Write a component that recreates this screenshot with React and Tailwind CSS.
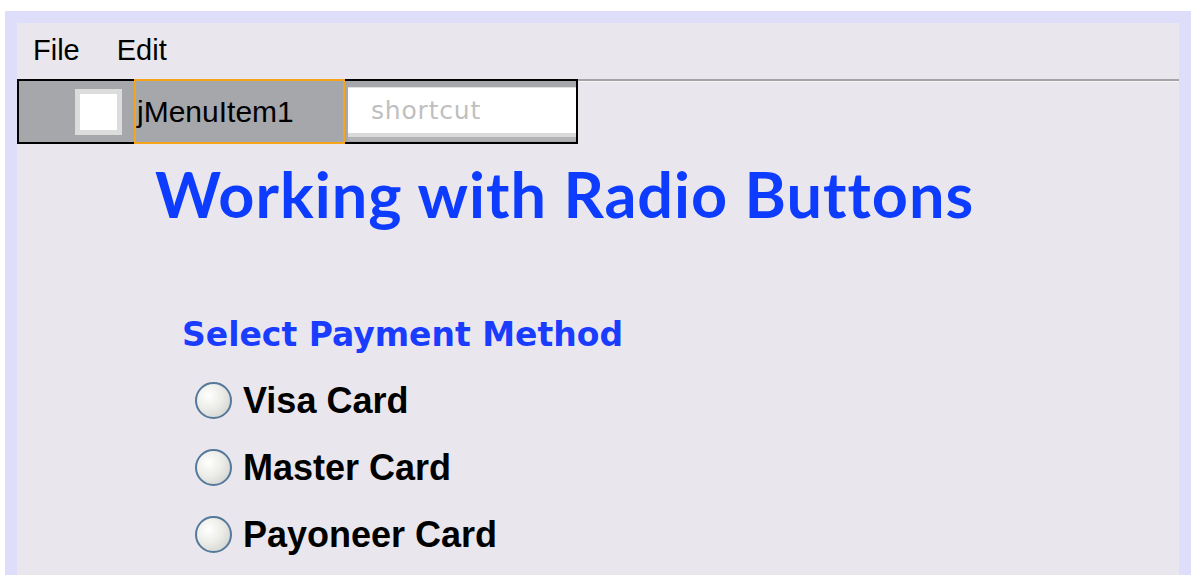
import React, { useState } from 'react';

const methods = ['Visa Card', 'Master Card', 'Payoneer Card'];

const RadioRow = ({ label, checked, onSelect }) => (
  <div className="flex items-center h-[67px] cursor-pointer" onClick={onSelect}>
    <span className="flex items-center justify-center w-[37px] h-[37px] rounded-full border-2 border-[#55799a] bg-[radial-gradient(circle_at_35%_35%,#ffffff,#ecece8_45%,#c9c9c6)]">
      {checked && <span className="w-[13px] h-[13px] rounded-full bg-[#1f3c5a]" />}
    </span>
    <span className="ml-[11px] text-[36px] leading-none font-bold text-black font-['Liberation_Sans',sans-serif]">
      {label}
    </span>
  </div>
);

const App = () => {
  const [selected, setSelected] = useState(null);

  return (
    <div className="h-screen bg-white pt-[11px] pl-[5px] overflow-hidden">
      <div className="w-[1186px] h-[564px] bg-[#dedefa] pt-[12px] pl-[12px] pr-[12px]">
        <div className="relative h-full overflow-hidden bg-[#e9e7ed]">
          {/* Menu bar */}
          <div className="flex items-center h-[56px] pl-[16px] gap-[37px] text-[29px] text-black font-['Liberation_Sans',sans-serif]">
            <span>File</span>
            <span>Edit</span>
          </div>
          <div className="h-[2px] bg-[#a4a4a6]" />
          <div className="h-[1px] bg-[#f6f6f8]" />

          {/* Open menu item */}
          <div className="absolute left-0 top-[56px] w-[561px] h-[65px] flex border-2 border-black bg-[#a6a7aa]">
            <div className="w-[115px] flex items-center pl-[56px]">
              <div className="w-[47px] h-[46px] border-[5px] border-[#dcdcdc] bg-white" />
            </div>
            <div className="w-[211px] -my-[2px] border-2 border-[#f5a41c] flex items-center pl-[1px] text-[30px] text-black font-['Liberation_Sans',sans-serif]">
              jMenuItem1
            </div>
            <div className="flex-1 flex flex-col pl-[3px] pt-[6px] pb-[1px]">
              <div className="flex-1 flex items-center bg-white border-t border-[#e2e2e2] pl-[23px] text-[25px] tracking-[0.8px] text-[#bfbfbf] font-['DejaVu_Sans',sans-serif]">
                shortcut
              </div>
              <div className="h-[4px] bg-[#dadada]" />
              <div className="h-[4px] bg-[#b3b3b5]" />
            </div>
          </div>

          {/* Content */}
          <div className="pt-[81px] pl-[138px]">
            <h1 className="text-[63px] leading-[62px] tracking-[1px] font-bold text-[#0d3cff] font-['Lato',sans-serif]">
              Working with Radio Buttons
            </h1>
            <div className="mt-[90px] pl-[27px] text-[33px] leading-[40px] font-bold text-[#1a3cff] font-['DejaVu_Sans',sans-serif]">
              Select Payment Method
            </div>
            <div className="mt-[12px] pl-[40px]">
              {methods.map((m) => (
                <RadioRow key={m} label={m} checked={selected === m} onSelect={() => setSelected(m)} />
              ))}
            </div>
          </div>
        </div>
      </div>
    </div>
  );
};

export default App;
